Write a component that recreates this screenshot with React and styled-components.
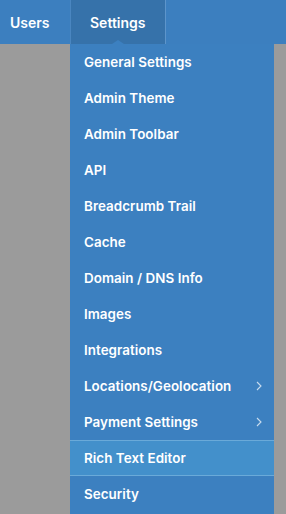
import React from 'react'
import styled, { createGlobalStyle } from 'styled-components'

const Global = createGlobalStyle`
  html, body {
    margin: 0;
    padding: 0;
    background: #9b9b9b;
    font-family: Inter, "Liberation Sans", Arial, sans-serif;
  }
`

const Bar = styled.div`
  display: flex;
  height: 44px;
  background: #3c7fbf;
`

const Tab = styled.div`
  position: relative;
  display: flex;
  align-items: center;
  box-sizing: border-box;
  height: 44px;
  padding: 0 ${p => p.pad}px;
  width: ${p => p.w}px;
  color: #fff;
  font-size: 14px;
  font-weight: 600;
  background: ${p => (p.active ? '#3672aa' : 'transparent')};
  border-left: ${p => (p.active ? '1px solid #4a86c0' : 'none')};
  border-right: ${p => (p.active ? '1px solid #5d95cb' : 'none')};
`

const Pointer = styled.span`
  position: absolute;
  left: 41px;
  bottom: 0;
  width: 0;
  height: 0;
  border-left: 6px solid transparent;
  border-right: 6px solid transparent;
  border-bottom: 4px solid #3c80c0;
`

const Menu = styled.ul`
  list-style: none;
  margin: 0 0 0 70px;
  padding: 0;
  width: 204px;
  background: #3c80c0;
  padding-bottom: 2px;
`

const Item = styled.li`
  display: flex;
  align-items: center;
  justify-content: space-between;
  box-sizing: border-box;
  height: 36px;
  padding: 0 12px 0 14px;
  color: #fff;
  font-size: 13.4px;
  font-weight: 600;
  letter-spacing: 0.05px;
  background: ${p => (p.hover ? '#4390cb' : 'transparent')};
  border-top: ${p => (p.hover ? '1px solid #6aaad9' : 'none')};
  border-bottom: ${p => (p.hover ? '1px solid #6aaad9' : 'none')};
`

const Chevron = () => (
  <svg width="6" height="10" viewBox="0 0 6 10">
    <path d="M1 1l4 4-4 4" fill="none" stroke="#c9dcee" strokeWidth="1.1" />
  </svg>
)

const items = [
  { label: 'General Settings' },
  { label: 'Admin Theme' },
  { label: 'Admin Toolbar' },
  { label: 'API' },
  { label: 'Breadcrumb Trail' },
  { label: 'Cache' },
  { label: 'Domain / DNS Info' },
  { label: 'Images' },
  { label: 'Integrations' },
  { label: 'Locations/Geolocation', sub: true },
  { label: 'Payment Settings', sub: true },
  { label: 'Rich Text Editor', hover: true },
  { label: 'Security' }
]

function App () {
  return (
    <div>
      <Global />
      <Bar>
        <Tab pad={10} w={70}>Users</Tab>
        <Tab active pad={19} w={96}>
          Settings
          <Pointer />
        </Tab>
      </Bar>
      <Menu>
        {items.map(item => (
          <Item key={item.label} hover={item.hover}>
            <span>{item.label}</span>
            {item.sub && <Chevron />}
          </Item>
        ))}
      </Menu>
    </div>
  )
}

export default App
